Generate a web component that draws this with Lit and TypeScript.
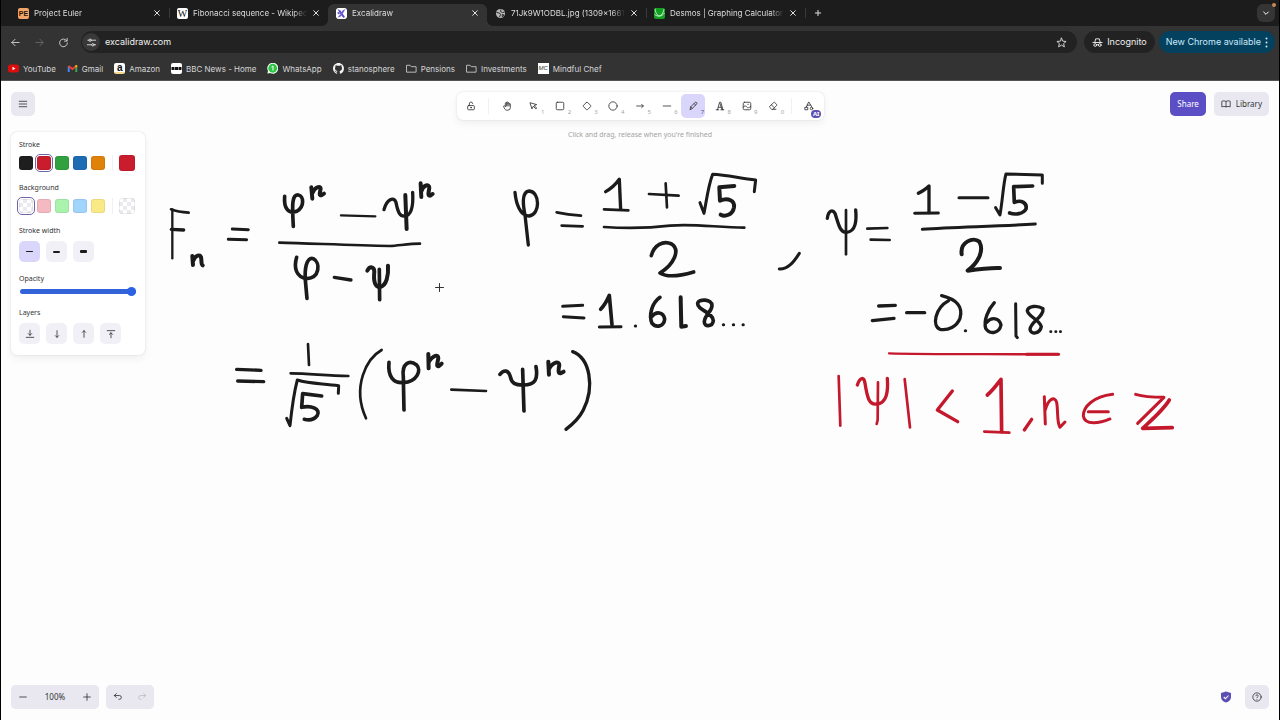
import { LitElement, html, svg, css, nothing } from "lit";
import { customElement, state } from "lit/decorators.js";
import { classMap } from "lit/directives/class-map.js";
import { styleMap } from "lit/directives/style-map.js";

const INK = "#1b1b1b";
const RED = "#c4182c";

/** Freehand strokes: path data and pen width, in thirds of a canvas pixel. */
type Stroke = [string, number];
interface Sketch { x: number; y: number; color: string; strokes: Stroke[]; label: string }

const sketches: Sketch[] = [
  {
    x: 150, y: 160, color: INK, label: "F n = (φⁿ − ψⁿ) / (φ − ψ)",
    strokes: [
      ["M67 148L67 295", 7], ["M63 148C80 155 95 157 116 158", 8], ["M64 208L101 210", 10],
      ["M127 288L129 315M130 302C136 285 151 282 153 292C156 302 152 312 158 316", 12],
      ["M247 207L295 209M235 238L290 239", 9],
      ["M404 109C401 145 415 163 440 154C465 140 461 107 445 105C424 102 427 142 430 199", 11],
      ["M484 82L487 116M487 100C495 80 512 76 512 86C510 98 506 107 514 106L522 101", 12],
      ["M573 166L676 169", 7],
      ["M702 149C710 118 732 108 738 127C744 158 750 170 765 168C787 165 790 130 788 97", 10],
      ["M766 105L770 207", 12],
      ["M812 70L814 111M814 94C820 74 838 71 838 83C836 98 832 107 841 107L848 102", 12],
      ["M388 248C480 250 600 256 720 258C750 256 780 251 810 251", 8],
      ["M440 292C430 325 440 352 470 356C510 354 512 308 490 296C468 290 464 330 466 360L471 415", 11],
      ["M553 352L603 360", 10],
      ["M652 332C660 317 673 320 673 335C670 365 675 381 690 381C710 378 716 345 714 317", 12],
      ["M688 328L689 419", 11],
    ],
  },
  {
    x: 490, y: 160, color: INK, label: "φ = (1 + √5) / 2 = 1.618…",
    strokes: [
      ["M75 97C78 130 90 167 117 168C152 164 150 95 118 93C94 95 99 135 105 165L115 255", 10],
      ["M200 157C225 162 250 165 273 167M215 197L278 199", 8],
      ["M347 95C365 85 378 72 388 58L392 148", 10], ["M342 148L415 151", 8],
      ["M477 102L566 107M527 70L531 142", 8],
      ["M630 128L642 160C650 120 655 75 668 43C710 45 750 55 797 60L793 95", 9],
      ["M733 78L688 82L690 122C715 112 735 122 732 142C728 165 705 171 692 164", 12],
      ["M342 201C420 206 480 204 540 197C610 191 680 202 763 203", 8],
      ["M484 287C492 255 520 240 545 252C572 270 552 313 510 339C530 352 570 348 611 336", 11],
      ["M868 327C895 328 912 305 928 280", 9],
      ["M218 439L278 436M220 470L282 474", 9],
      ["M332 448C345 435 352 420 358 406L366 494", 11], ["M328 501L393 500", 9],
      ["M436 498L437 498", 9],
      ["M510 412C485 430 476 465 486 490C500 506 523 498 524 477C520 455 498 453 485 470", 11],
      ["M572 412L574 500L588 498", 12],
      ["M666 437C667 417 625 415 623 431C622 450 670 458 670 482C668 501 642 502 643 485C645 462 666 455 666 437", 11],
      ["M700 494L701 494M730 494L731 494M759 494L760 494", 9],
    ],
  },
  {
    x: 810, y: 160, color: INK, label: "ψ = (1 − √5) / 2 = −0.618…",
    strokes: [
      ["M52 175C55 150 68 148 75 160C85 188 88 218 110 217C138 215 140 180 137 150", 10],
      ["M108 150L108 283", 8],
      ["M172 206L232 204M182 239L239 240", 8],
      ["M325 100C340 92 350 85 357 78L357 158", 10], ["M314 160L385 159", 9],
      ["M447 113L534 113", 9],
      ["M557 143L570 165C578 120 580 70 588 42L697 45L697 70", 9],
      ["M668 78L611 80L613 127C635 118 652 130 648 147C640 162 615 165 599 159", 11],
      ["M337 208C430 201 540 200 676 192", 9],
      ["M455 283C450 245 490 230 508 245C524 275 502 310 473 332C500 328 535 323 570 324", 12],
      ["M206 438L256 436M187 482L252 475", 10],
      ["M290 458L344 458", 10],
      ["M395 407C440 418 460 440 450 475C440 500 415 512 390 508C366 498 374 445 416 422", 10],
      ["M466 512L467 512", 9],
      ["M553 428C533 450 521 482 527 505C540 525 568 520 573 495C568 473 545 470 530 487", 10],
      ["M617 431L618 528L622 533", 9],
      ["M699 446C682 435 655 438 652 452C655 470 690 480 694 500C690 522 662 525 660 508C662 485 703 470 699 446", 10],
      ["M722 515L723 515M737 515L738 515M751 515L752 515", 8],
    ],
  },
  {
    x: 220, y: 330, color: INK, label: "= 1/√5 (φⁿ − ψⁿ)",
    strokes: [
      ["M50 118L123 121M53 153L131 155", 10],
      ["M264 42L267 105", 8],
      ["M212 130C270 130 320 138 385 138", 8],
      ["M200 265L210 287C215 240 220 195 232 150C270 162 310 160 356 167L355 190", 9],
      ["M305 198L248 191L245 232C275 225 303 238 292 256C282 270 268 272 253 268", 11],
      ["M485 60C440 85 395 170 438 265", 8],
      ["M507 97C503 140 520 160 550 158C592 155 605 120 590 105C568 88 545 100 550 140L552 240", 11],
      ["M625 72L626 115M626 97C640 74 655 73 655 85C652 100 648 111 657 108L665 101", 12],
      ["M694 179L798 183", 8],
      ["M840 133C852 118 866 120 871 140C875 160 885 165 910 165C945 165 955 150 948 110", 11],
      ["M908 118L912 243", 11],
      ["M985 95L987 134M987 117C1000 94 1018 93 1018 105C1015 120 1014 131 1022 130L1031 125", 12],
      ["M1058 65C1110 85 1125 170 1090 240C1075 270 1055 285 1038 298", 10],
    ],
  },
  {
    x: 810, y: 340, color: RED, label: "|ψ| < 1, n ∈ ℤ",
    strokes: [
      ["M237 40C330 43 450 42 747 43", 7], ["M650 43L745 43", 9],
      ["M86 108L91 257", 8],
      ["M142 135C150 110 162 110 165 130C172 175 178 195 200 192C230 190 235 155 232 115", 10],
      ["M204 127L203 240L200 252", 8],
      ["M284 117L300 262", 8],
      ["M427 153L382 210L443 245", 10],
      ["M532 165C548 152 560 135 573 118L575 275", 11], ["M523 275L598 278", 8],
      ["M665 238L643 270", 10],
      ["M703 170L706 252M706 210C715 175 735 168 740 187C745 215 740 245 750 262L765 246", 9],
      ["M908 163C850 170 820 200 820 228C825 258 870 250 900 237M835 215L895 215", 9],
      ["M977 163C1000 170 1035 172 1062 172L983 250", 9],
      ["M1078 180C1060 210 1025 240 998 265L1087 263", 11],
    ],
  },
];

const icons = {
  back: svg`<path d="M20 12H4M11 5l-7 7 7 7"/>`,
  forward: svg`<path d="M4 12h16M13 5l7 7-7 7"/>`,
  reload: svg`<path d="M19 8a8.5 8.5 0 1 0 1.500 5M20 3v6h-6"/>`,
  tune: svg`<path d="M4 7h3M12 7h9M3 17h9M18 17h3"/><circle cx="9" cy="7" r="2.600"/><circle cx="15" cy="17" r="2.600"/>`,
  star: svg`<path d="M12 2.500l2.900 6.600 7.100.6-5.400 4.700 1.700 7.100-6.300-3.800-6.300 3.800 1.700-7.100-5.400-4.700 7.100-.6z"/>`,
  incognito: svg`<path d="M2 12h20M6 12l2-8h8l2 8"/><circle cx="7" cy="17.500" r="3"/><circle cx="17" cy="17.500" r="3"/><path d="M10 17h4"/>`,
  close: svg`<path d="M5 5l14 14M19 5L5 19"/>`,
  plus: svg`<path d="M12 4v16M4 12h16"/>`,
  minus: svg`<path d="M4 12h16"/>`,
  chevron: svg`<path d="M5 9l7 7 7-7"/>`,
  folder: svg`<path d="M2 5h7l2.500 3H22v12H2z"/>`,
  menu: svg`<path d="M3 5.500h18M3 12h18M3 18.500h18"/>`,
  book: svg`<path d="M12 6C9 4 5 4 2 5.500V19c3-1.500 7-1.500 10 0 3-1.500 7-1.500 10 0V5.500C19 4 15 4 12 6v13"/>`,
  lock: svg`<rect x="4" y="11" width="16" height="10" rx="2"/><circle cx="12" cy="16" r="1"/><path d="M8 11V7a4 4 0 0 1 8-1"/>`,
  hand: svg`<path d="M8 13V5.500a1.500 1.500 0 0 1 3 0V12M11 5.500v-2a1.500 1.500 0 1 1 3 0V12M14 5.500a1.500 1.500 0 0 1 3 0V12M17 7.500a1.500 1.500 0 0 1 3 0V16a6 6 0 0 1-6 6h-2c-3 0-4-1-5.300-3l-2.900-5.300a1.500 1.500 0 0 1 2.600-1.500L8 13"/>`,
  pointer: svg`<path d="M5 5l4.500 14 3-6.500L19 19l2-2-6.500-6L20 9z"/>`,
  square: svg`<rect x="3" y="3" width="18" height="18" rx="2.500"/>`,
  diamond: svg`<path d="M10.500 3.500l-7 7a2 2 0 0 0 0 3l7 7a2 2 0 0 0 3 0l7-7a2 2 0 0 0 0-3l-7-7a2 2 0 0 0-3 0z"/>`,
  circle: svg`<circle cx="12" cy="12" r="10"/>`,
  arrow: svg`<path d="M4 12h16M16 8l4 4-4 4"/>`,
  line: svg`<path d="M3 12h18"/>`,
  pencil: svg`<path d="M5 20l1.500-6L17 3.500a2.500 2.500 0 0 1 3.700 3.700L10 18zM14.500 6l3.700 3.700M6.500 14l3.700 3.700"/>`,
  letter: svg`<path d="M3 21h6M14 21h7M6 21L11 3h3l5 18M8 15h8M12 6l5 15"/>`,
  image: svg`<rect x="3" y="3" width="18" height="18" rx="3"/><path d="M3 15c3-4 5-5 8-1s6 2 10-1M14 8h1"/>`,
  eraser: svg`<path d="M19 20H9l-5-5a1.500 1.500 0 0 1 0-2L14 3.500a1.500 1.500 0 0 1 2 0L21 8.500a1.500 1.500 0 0 1 0 2L11.500 20M8 9l7.500 7.500"/>`,
  shapes: svg`<path d="M12 3l4 7H8z"/><rect x="3" y="15" width="6" height="6"/><circle cx="18" cy="18" r="3"/><path d="M8 10l-3 5M16 10l3 5"/>`,
  toBack: svg`<path d="M12 3v12M8 11l4 4 4-4M3 20h18"/>`,
  down: svg`<path d="M12 4v16M8 16l4 4 4-4"/>`,
  up: svg`<path d="M12 4v16M8 8l4-4 4 4"/>`,
  toFront: svg`<path d="M12 21V9M8 13l4-4 4 4M3 4h18"/>`,
  undo: svg`<path d="M8 13L3 8.500 8 4M3 8.500h12.500a4.500 4.500 0 0 1 0 9H14"/>`,
  redo: svg`<path d="M16 13l5-4.500L16 4M21 8.500H8.500a4.500 4.500 0 0 0 0 9H10"/>`,
  help: svg`<circle cx="12" cy="12" r="10"/><path d="M12 17.500v.1M12 13.500c0-2 3-2 3-4.200C15 6 9.500 6 9 9"/>`,
};
type IconName = keyof typeof icons;

const icon = (name: IconName, cls = "i12") =>
  html`<svg class="icon ${cls}" viewBox="0 0 24 24" aria-hidden="true">${icons[name]}</svg>`;

const favicons: Record<string, unknown> = {
  euler: html`<span class="fav euler">PE</span>`,
  wiki: html`<span class="fav wiki">W</span>`,
  excalidraw: html`<svg class="fav" viewBox="0 0 22 22" aria-hidden="true"><rect width="22" height="22" rx="4" fill="#fff"/><path d="M3 2l6 3 9 13-3 2-6-7z" fill="#5b50c9"/><path d="M19 2l-6 3-4 7 3 2zM8 13l-5 6 5-1 3-3zM2 9l4-1 2 3-3 2z" fill="#6a60d4"/></svg>`,
  globe: html`<svg class="fav" viewBox="0 0 22 22" aria-hidden="true"><circle cx="11" cy="11" r="9" fill="#b9b9b9"/><path d="M3 9l6 1 2 3-2 5M12 3l-1 4 4 2 4-1M14 13l4 1-3 4z" fill="none" stroke="#2b2b2b" stroke-width="2"/></svg>`,
  desmos: html`<svg class="fav" viewBox="0 0 22 22" aria-hidden="true"><rect width="22" height="22" fill="#12a022"/><path d="M2 1C4 20 17 20 20 2M1 13c7 5 14 5 20-3" fill="none" stroke="#e4ffe4" stroke-width="1.600"/></svg>`,
  youtube: html`<svg class="fav" viewBox="0 0 22 22" aria-hidden="true"><rect x="0" y="3" width="22" height="16" rx="5" fill="#e00c0c"/><path d="M9 7.500v7l6-3.500z" fill="#fff"/></svg>`,
  gmail: html`<svg class="fav" viewBox="0 0 22 22" aria-hidden="true"><g fill="none" stroke-width="4"><path d="M3.500 18V6" stroke="#4285f4"/><path d="M18.500 18V6" stroke="#34a853"/><path d="M3 6l8 6 8-6" stroke="#ea4335"/><path d="M17 7.500l3-2.500" stroke="#fbbc04"/></g></svg>`,
  amazon: html`<span class="fav amazon">a</span>`,
  bbc: html`<svg class="fav" viewBox="0 0 22 22" aria-hidden="true"><rect width="22" height="22" fill="#fff"/><path d="M1 8h6v6H1zM8 8h6v6H8zM15 8h6v6h-6z" fill="#111"/></svg>`,
  whatsapp: html`<svg class="fav" viewBox="0 0 22 22" aria-hidden="true"><path d="M0 22l2-6A11 11 0 1 1 6 20z" fill="#e9ffe9"/><circle cx="11.500" cy="10.500" r="8.800" fill="#2cc544"/><path d="M9 8l3-2v9" fill="none" stroke="#fff" stroke-width="2"/></svg>`,
  github: html`<svg class="fav" viewBox="0 0 16 16" aria-hidden="true"><path fill="#f2f2f2" d="M8 0C3.580 0 0 3.580 0 8c0 3.540 2.290 6.530 5.470 7.590.4.070.55-.17.55-.38v-1.490c-2.230.48-2.700-.95-2.700-.95-.36-.92-.89-1.170-.89-1.170-.73-.5.050-.49.050-.49.800.060 1.230.83 1.230.83.720 1.220 1.880.87 2.340.66.070-.52.280-.87.510-1.070-1.780-.2-3.640-.89-3.640-3.950 0-.87.310-1.590.82-2.150-.08-.2-.36-1.020.08-2.120 0 0 .67-.21 2.200.82a7.600 7.600 0 0 1 4 0c1.530-1.040 2.200-.82 2.200-.82.44 1.100.16 1.920.08 2.120.51.560.82 1.270.82 2.150 0 3.070-1.870 3.750-3.650 3.950.29.250.54.730.54 1.480v2.200c0 .21.150.46.550.38A8 8 0 0 0 16 8c0-4.420-3.580-8-8-8z"/></svg>`,
  folder: html`<svg class="fav icon folder" viewBox="0 0 24 24" aria-hidden="true">${icons.folder}</svg>`,
  chef: html`<span class="fav chef">MC</span>`,
};

const tabs = [
  { fav: "euler", title: "Project Euler", divider: true },
  { fav: "wiki", title: "Fibonacci sequence - Wikipedia" },
  { fav: "excalidraw", title: "Excalidraw", active: true },
  { fav: "globe", title: "71Jk9W1ODBL.jpg (1309×1661)", divider: true },
  { fav: "desmos", title: "Desmos | Graphing Calculator", divider: true },
];

const bookmarks = [
  ["youtube", "YouTube"], ["gmail", "Gmail"], ["amazon", "Amazon"], ["bbc", "BBC News - Home"],
  ["whatsapp", "WhatsApp"], ["github", "stanosphere"], ["folder", "Pensions"],
  ["folder", "Investments"], ["chef", "Mindful Chef"],
];

@customElement("browser-chrome")
export class BrowserChrome extends LitElement {
  static styles = css`
    :host { display: block; font: 9px/12px Inter, "Liberation Sans", sans-serif; color: #dedede; background: #333; }
    * { box-sizing: border-box; }
    button { font: inherit; color: inherit; background: none; border: 0; padding: 0; display: inline-flex; align-items: center; justify-content: center; flex: none; }
    .icon { fill: none; stroke: currentColor; stroke-width: 2; stroke-linecap: round; stroke-linejoin: round; flex: none; }
    .i8 { width: 8px; height: 8px; stroke-width: 3; }
    .i12 { width: 11px; height: 11px; stroke-width: 2; }
    .tabs { display: flex; height: 26px; padding: 0 4px 0 9px; background: #1c1c1c; }
    .tab { position: relative; display: flex; align-items: center; gap: 5px; flex: 0 1 159px; min-width: 0; margin-top: 4px; height: 22px; padding: 0 8px 4px; }
    .tab.active { background: #333; border-radius: 6px 6px 0 0; }
    .tab.active::before, .tab.active::after { content: ""; position: absolute; bottom: 0; width: 6px; height: 6px; }
    .tab.active::before { right: 100%; background: radial-gradient(circle at 0 0, transparent 6px, #333 6px); }
    .tab.active::after { left: 100%; background: radial-gradient(circle at 100% 0, transparent 6px, #333 6px); }
    .tab.divider::after { content: ""; position: absolute; right: -1px; top: 4px; width: 1px; height: 10px; background: #3a3a3a; }
    .title { flex: 1; min-width: 0; font-size: 8px; overflow: hidden; white-space: nowrap; mask-image: linear-gradient(90deg, #000 88%, transparent); }
    .fav { width: 11px; height: 11px; flex: none; border-radius: 2px; text-align: center; overflow: hidden; }
    .folder { border-radius: 0; color: #c4c4c4; }
    .euler { background: #f2a569; color: #2b1708; font: bold 7px/11px "Liberation Sans", sans-serif; }
    .wiki { background: #fff; color: #111; font: 10px/11px "Liberation Serif", serif; }
    .amazon { background: #fff; color: #111; font: bold 10px/9px "Liberation Sans", sans-serif; border-bottom: 2px solid #f4d88e; }
    .chef { background: #fff; color: #333; font: italic 6px/11px "Liberation Sans", sans-serif; border-radius: 0; }
    .add { margin-left: 9px; }
    .search { position: relative; margin-left: auto; align-self: center; width: 18px; height: 18px; border-radius: 6px; background: #353535; color: #fff; }
    .search::after { content: ""; position: absolute; right: -1px; top: -1px; width: 4px; height: 4px; border-radius: 50%; background: #c98a55; }
    .bar { display: flex; align-items: center; gap: 7px; height: 32px; padding: 0 4px 0 7px; }
    .nav { width: 14px; height: 20px; color: #d0d0d0; }
    .nav + .nav { margin-left: 3px; }
    .nav:disabled { color: #666; }
    .omni { display: flex; align-items: center; flex: 1; min-width: 0; height: 22px; margin-left: 4px; padding: 0 10px 0 1px; gap: 5px; border-radius: 11px; background: #222; }
    .site { width: 18px; height: 18px; border-radius: 50%; background: #383838; }
    .omni input { flex: 1; min-width: 0; background: none; border: 0; padding: 0; outline: 0; color: #f0f0f0; font: inherit; }
    .chip { height: 22px; border-radius: 11px; padding: 0 8px; gap: 4px; background: #222; color: #eee; white-space: nowrap; }
    .update { background: #04415f; color: #c9eafc; padding: 0 7px; margin-left: -3px; }
    .dots { width: 3px; height: 11px; fill: currentColor; }
    .marks { display: flex; align-items: center; gap: 11px; height: 23px; padding: 0 7px 1px; font-size: 8px; border-bottom: 1px solid #555; overflow: hidden; }
    .marks a { display: flex; align-items: center; gap: 4px; color: #d6d6d6; text-decoration: none; white-space: nowrap; }
  `;

  render() {
    return html`
      <div class="tabs">
        ${tabs.map((t) => html`
          <div class=${classMap({ tab: true, active: !!t.active, divider: !!t.divider })}>
            ${favicons[t.fav]}<span class="title">${t.title}</span>
            <button aria-label="Close tab">${icon("close", "i8")}</button>
          </div>`)}
        <button class="add" aria-label="New tab">${icon("plus", "i8")}</button>
        <button class="search" aria-label="Search tabs">${icon("chevron", "i8")}</button>
      </div>
      <div class="bar">
        <button class="nav" aria-label="Back">${icon("back")}</button>
        <button class="nav" aria-label="Forward" disabled>${icon("forward")}</button>
        <button class="nav" aria-label="Reload">${icon("reload")}</button>
        <div class="omni">
          <button class="site" aria-label="Site information">${icon("tune")}</button>
          <input aria-label="Address" value="excalidraw.com" />
          <button aria-label="Bookmark">${icon("star")}</button>
        </div>
        <button class="chip">${icon("incognito")}Incognito</button>
        <button class="chip update">New Chrome available
          <svg class="dots" viewBox="0 0 3 11" aria-hidden="true"><circle cx="1.500" cy="1.500" r="1"/><circle cx="1.500" cy="5.500" r="1"/><circle cx="1.500" cy="9.500" r="1"/></svg>
        </button>
      </div>
      <nav class="marks">${bookmarks.map(([f, t]) => html`<a href="#">${favicons[f]}${t}</a>`)}</nav>
    `;
  }
}

const tools: { name: IconName; label: string; key?: string; selected?: boolean }[] = [
  { name: "hand", label: "Hand" },
  { name: "pointer", label: "Selection", key: "1" },
  { name: "square", label: "Rectangle", key: "2" },
  { name: "diamond", label: "Diamond", key: "3" },
  { name: "circle", label: "Ellipse", key: "4" },
  { name: "arrow", label: "Arrow", key: "5" },
  { name: "line", label: "Line", key: "6" },
  { name: "pencil", label: "Draw", key: "7", selected: true },
  { name: "letter", label: "Text", key: "8" },
  { name: "image", label: "Insert image", key: "9" },
  { name: "eraser", label: "Eraser", key: "0" },
];

@customElement("draw-app")
export class DrawApp extends LitElement {
  @state() private opacity = 100;

  static styles = css`
    :host { display: flex; flex-direction: column; justify-content: space-between; position: relative; padding: 11px 10px; background: #fdfdfd; color: #333; font: 8px/12px "Noto Sans", "Open Sans", sans-serif; }
    * { box-sizing: border-box; }
    button { font: inherit; color: inherit; border: 0; padding: 0; display: inline-flex; align-items: center; justify-content: center; background: #e9e8f1; border-radius: 5px; flex: none; }
    .icon { width: 12px; height: 12px; fill: none; stroke: currentColor; stroke-width: 2; stroke-linecap: round; stroke-linejoin: round; flex: none; }
    .i10 { width: 10px; height: 10px; }
    .canvas { position: absolute; inset: 0; width: 100%; height: 100%; overflow: hidden; }
    .canvas path { fill: none; stroke-linecap: round; stroke-linejoin: round; }
    .top { position: relative; display: grid; grid-template-columns: 1fr auto 1fr; align-items: start; }
    .left { display: flex; flex-direction: column; align-items: flex-start; gap: 16px; }
    .square { width: 24px; height: 24px; }
    .center { display: flex; flex-direction: column; align-items: center; gap: 8px; }
    .right { display: flex; justify-content: flex-end; gap: 8px; }
    .island { background: #fff; border-radius: 6px; box-shadow: 0 0 1px rgba(0, 0, 0, .1), 0 0 3px rgba(0, 0, 0, .07), 0 4px 9px rgba(0, 0, 0, .05); }
    .tools { display: flex; align-items: center; justify-content: space-between; width: 367px; padding: 2px; height: 28px; }
    .tool { position: relative; width: 24px; height: 24px; background: none; }
    .tool.on { background: #dad6fb; }
    .key { position: absolute; right: 1px; bottom: 2px; font-size: 6px; line-height: 8px; color: #a6a6a6; }
    .on .key { color: #5d588c; }
    .ai { position: absolute; right: 0; bottom: 0; padding: 0 2px; border-radius: 4px; background: #5b50b0; color: #fff; font-size: 6px; font-weight: bold; line-height: 8px; }
    .line { width: 1px; height: 16px; margin: 0 3px; background: #f1f1f5; }
    .hint { color: #a3a3a3; font-size: 7px; line-height: 14px; }
    .share { height: 24px; padding: 0 7px; background: #5c4fc6; color: #fff; }
    .library { height: 24px; padding: 0 7px; gap: 5px; }
    .panel { display: flex; flex-direction: column; gap: 10px; width: 134px; padding: 6px 8px 11px; }
    fieldset { border: 0; margin: 0; padding: 0; min-width: 0; }
    legend, label { display: block; padding: 0; font-size: 7px; line-height: 14px; }
    .row { display: flex; align-items: center; padding-top: 3px; }
    .swatches { gap: 4px; height: 19px; }
    .swatch { width: 14px; height: 14px; border-radius: 3px; box-shadow: inset 0 0 0 1px rgba(0, 0, 0, .07); }
    .swatch.on { outline: 1px solid #6c66a8; outline-offset: 1px; }
    .swatch.big { width: 16px; height: 16px; }
    .clear { background: #fff conic-gradient(#ebebef 25%, #fff 0 50%, #ebebef 0 75%, #fff 0) 0 0 / 8px 8px; }
    .swatches .line { margin: 0 2px 0 3px; }
    .picks { gap: 6px; }
    .pick { width: 21px; height: 21px; background: #f1f0f7; }
    .pick.on { background: #dad6fb; }
    .dash { width: 7px; border-radius: 1px; background: #1b1b1b; }
    .w1 { height: 1px; } .w2 { height: 2px; } .w3 { height: 3px; }
    input[type="range"] { appearance: none; display: block; width: 100%; height: 10px; margin: 0; padding: 0 1px; background: none; }
    input[type="range"]::-webkit-slider-runnable-track { height: 5px; border-radius: 3px; background: #3263d8; }
    input[type="range"]::-webkit-slider-thumb { appearance: none; width: 9px; height: 9px; margin-top: -2px; border-radius: 50%; background: #2b62e3; }
    .foot { position: relative; display: flex; align-items: center; gap: 7px; }
    .group { display: flex; background: #e9e8f1; border-radius: 5px; }
    .group button { width: 24px; height: 24px; }
    .group .zoom { width: 40px; }
    .group .faded { color: #bdbdc8; }
    .shield { width: 12px; height: 12px; margin-left: auto; margin-right: 6px; }
  `;

  private swatches(title: string, colors: string[], on: number, current: string) {
    const one = (c: string, cls: object, label: string) => html`<button
      class=${classMap({ swatch: true, clear: c === "", ...cls })}
      style=${c ? styleMap({ background: c }) : nothing} aria-label=${label}></button>`;
    return html`<fieldset><legend>${title}</legend><div class="row swatches">
      ${colors.map((c, i) => one(c, { on: i === on }, c || "transparent"))}
      <span class="line"></span>${one(current, { big: true }, `${title} colour`)}
    </div></fieldset>`;
  }

  render() {
    return html`
      <svg class="canvas" role="img" aria-label="Drawing">
        <g transform="translate(-1 -81)">
          ${sketches.map((s) => svg`<g aria-label=${s.label} transform="translate(${s.x} ${s.y}) scale(.3333)" stroke=${s.color}>
            ${s.strokes.map(([d, w]) => svg`<path d=${d} stroke-width=${w}/>`)}</g>`)}
          <path d="M435.500 287.500h8M439.500 283.500v8" stroke="#333" stroke-width="1"/>
        </g>
      </svg>
      <div class="top">
        <div class="left">
          <button class="square" aria-label="Menu">${icon("menu", "i10")}</button>
          <section class="panel island">
            ${this.swatches("Stroke", ["#1e1e1e", "#c91c2d", "#31a13f", "#1c6cb4", "#e08208"], 1, "#c91c2d")}
            ${this.swatches("Background", ["", "#f5b9c1", "#aaf3ad", "#a2d5fb", "#f9ea86"], 0, "")}
            <fieldset><legend>Stroke width</legend><div class="row picks">
              ${[1, 2, 3].map((n) => html`<button class=${classMap({ pick: true, on: n === 1 })} aria-label="Width ${n}"><span class="dash w${n}"></span></button>`)}
            </div></fieldset>
            <div>
              <label for="opacity">Opacity</label>
              <input id="opacity" type="range" min="0" max="100" .value=${String(this.opacity)}
                @input=${(e: Event) => (this.opacity = +(e.target as HTMLInputElement).value)} />
            </div>
            <fieldset><legend>Layers</legend><div class="row picks">
              ${(["toBack", "down", "up", "toFront"] as IconName[]).map((n) => html`<button class="pick" aria-label=${n}>${icon(n, "i10")}</button>`)}
            </div></fieldset>
          </section>
        </div>
        <div class="center">
          <div class="tools island" role="toolbar">
            <button class="tool" aria-label="Keep tool active">${icon("lock", "i10")}</button>
            <span class="line"></span>
            ${tools.map((t) => html`<button class=${classMap({ tool: true, on: !!t.selected })} aria-label=${t.label}>
              ${icon(t.name, "i10")}${t.key ? html`<span class="key">${t.key}</span>` : nothing}</button>`)}
            <span class="line"></span>
            <button class="tool" aria-label="More tools">${icon("shapes", "i10")}<span class="ai">AI</span></button>
          </div>
          <div class="hint">Click and drag, release when you're finished</div>
        </div>
        <div class="right">
          <button class="share">Share</button>
          <button class="library">${icon("book", "i10")}Library</button>
        </div>
      </div>
      <div class="foot">
        <div class="group">
          <button aria-label="Zoom out">${icon("minus", "i10")}</button>
          <button class="zoom">100%</button>
          <button aria-label="Zoom in">${icon("plus", "i10")}</button>
        </div>
        <div class="group">
          <button aria-label="Undo">${icon("undo", "i10")}</button>
          <button class="faded" aria-label="Redo">${icon("redo", "i10")}</button>
        </div>
        <svg class="shield" viewBox="0 0 24 24" aria-label="End-to-end encrypted"><path d="M12 1l10 3v8c0 6-4 9-10 11C6 21 2 18 2 12V4z" fill="#5b4fb5"/><path d="M7.500 12l3.500 3.500 6-6.500" fill="none" stroke="#fff" stroke-width="2.200"/></svg>
        <button class="square" aria-label="Help">${icon("help", "i10")}</button>
      </div>
    `;
  }
}

@customElement("app-root")
export class AppRoot extends LitElement {
  static styles = css`
    :host { display: flex; flex-direction: column; box-sizing: border-box; min-height: 100vh; border: solid #000; border-width: 0 1px; }
    draw-app { flex: 1; }
  `;
  render() {
    return html`<browser-chrome></browser-chrome><draw-app></draw-app>`;
  }
}
